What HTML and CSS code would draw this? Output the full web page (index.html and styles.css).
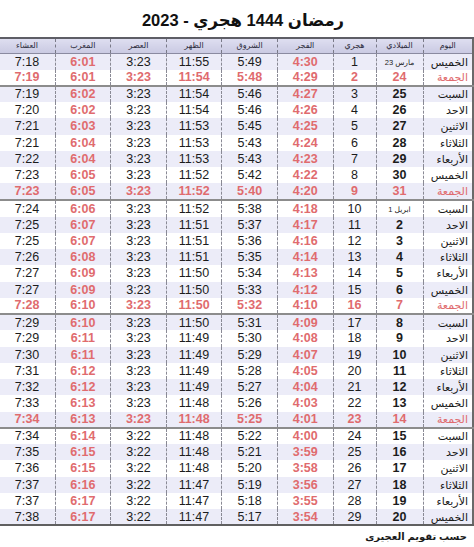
FILE: index.html
```html
<!DOCTYPE html>
<html lang="ar" dir="rtl">
<head>
<meta charset="utf-8">
<title>رمضان 1444</title>
<link rel="stylesheet" href="styles.css">
</head>
<body>
<div class="page">
  <h1 class="title">رمضان 1444 هجري - 2023</h1>
  <table class="tbl">
    <colgroup>
      <col class="c-day"><col class="c-mil"><col class="c-hij"><col class="c-t"><col class="c-t"><col class="c-t"><col class="c-t"><col class="c-t"><col class="c-t">
    </colgroup>
    <thead>
      <tr><th>اليوم</th><th>الميلادي</th><th>هجري</th><th>الفجر</th><th>الشروق</th><th>الظهر</th><th>العصر</th><th>المغرب</th><th>العشاء</th></tr>
    </thead>
    <tbody>
      <tr class="odd"><td class="day">الخميس</td><td class="mil"><span class="mon" dir="ltr">مارس 23</span></td><td>1</td><td class="red">4:30</td><td>5:49</td><td>11:55</td><td>3:23</td><td class="red">6:01</td><td>7:18</td></tr>
      <tr class="fri"><td class="day">الجمعة</td><td class="mil">24</td><td>2</td><td class="red">4:29</td><td>5:48</td><td>11:54</td><td>3:23</td><td class="red">6:01</td><td>7:19</td></tr>

      <tr class="odd wk"><td class="day">السبت</td><td class="mil">25</td><td>3</td><td class="red">4:27</td><td>5:46</td><td>11:54</td><td>3:23</td><td class="red">6:02</td><td>7:19</td></tr>
      <tr><td class="day">الاحد</td><td class="mil">26</td><td>4</td><td class="red">4:26</td><td>5:46</td><td>11:54</td><td>3:23</td><td class="red">6:02</td><td>7:20</td></tr>
      <tr class="odd"><td class="day">الاثنين</td><td class="mil">27</td><td>5</td><td class="red">4:25</td><td>5:45</td><td>11:53</td><td>3:23</td><td class="red">6:03</td><td>7:21</td></tr>
      <tr><td class="day">الثلاثاء</td><td class="mil">28</td><td>6</td><td class="red">4:24</td><td>5:43</td><td>11:53</td><td>3:23</td><td class="red">6:04</td><td>7:21</td></tr>
      <tr class="odd"><td class="day">الأربعاء</td><td class="mil">29</td><td>7</td><td class="red">4:23</td><td>5:43</td><td>11:53</td><td>3:23</td><td class="red">6:04</td><td>7:22</td></tr>
      <tr><td class="day">الخميس</td><td class="mil">30</td><td>8</td><td class="red">4:22</td><td>5:42</td><td>11:52</td><td>3:23</td><td class="red">6:05</td><td>7:23</td></tr>
      <tr class="odd fri"><td class="day">الجمعة</td><td class="mil">31</td><td>9</td><td class="red">4:20</td><td>5:40</td><td>11:52</td><td>3:23</td><td class="red">6:05</td><td>7:23</td></tr>

      <tr class="wk"><td class="day">السبت</td><td class="mil"><span class="mon" dir="ltr">ابريل 1</span></td><td>10</td><td class="red">4:18</td><td>5:38</td><td>11:52</td><td>3:23</td><td class="red">6:06</td><td>7:24</td></tr>
      <tr class="odd"><td class="day">الاحد</td><td class="mil">2</td><td>11</td><td class="red">4:17</td><td>5:37</td><td>11:51</td><td>3:23</td><td class="red">6:07</td><td>7:25</td></tr>
      <tr><td class="day">الاثنين</td><td class="mil">3</td><td>12</td><td class="red">4:16</td><td>5:36</td><td>11:51</td><td>3:23</td><td class="red">6:07</td><td>7:25</td></tr>
      <tr class="odd"><td class="day">الثلاثاء</td><td class="mil">4</td><td>13</td><td class="red">4:14</td><td>5:35</td><td>11:51</td><td>3:23</td><td class="red">6:08</td><td>7:26</td></tr>
      <tr><td class="day">الأربعاء</td><td class="mil">5</td><td>14</td><td class="red">4:13</td><td>5:34</td><td>11:50</td><td>3:23</td><td class="red">6:09</td><td>7:27</td></tr>
      <tr class="odd"><td class="day">الخميس</td><td class="mil">6</td><td>15</td><td class="red">4:12</td><td>5:33</td><td>11:50</td><td>3:23</td><td class="red">6:09</td><td>7:27</td></tr>
      <tr class="fri"><td class="day">الجمعة</td><td class="mil">7</td><td>16</td><td class="red">4:10</td><td>5:32</td><td>11:50</td><td>3:23</td><td class="red">6:10</td><td>7:28</td></tr>

      <tr class="odd wk"><td class="day">السبت</td><td class="mil">8</td><td>17</td><td class="red">4:09</td><td>5:31</td><td>11:50</td><td>3:23</td><td class="red">6:10</td><td>7:29</td></tr>
      <tr><td class="day">الاحد</td><td class="mil">9</td><td>18</td><td class="red">4:08</td><td>5:30</td><td>11:49</td><td>3:23</td><td class="red">6:11</td><td>7:29</td></tr>
      <tr class="odd"><td class="day">الاثنين</td><td class="mil">10</td><td>19</td><td class="red">4:07</td><td>5:29</td><td>11:49</td><td>3:23</td><td class="red">6:11</td><td>7:30</td></tr>
      <tr><td class="day">الثلاثاء</td><td class="mil">11</td><td>20</td><td class="red">4:05</td><td>5:28</td><td>11:49</td><td>3:23</td><td class="red">6:12</td><td>7:31</td></tr>
      <tr class="odd"><td class="day">الأربعاء</td><td class="mil">12</td><td>21</td><td class="red">4:04</td><td>5:27</td><td>11:49</td><td>3:23</td><td class="red">6:12</td><td>7:32</td></tr>
      <tr><td class="day">الخميس</td><td class="mil">13</td><td>22</td><td class="red">4:03</td><td>5:26</td><td>11:48</td><td>3:23</td><td class="red">6:13</td><td>7:33</td></tr>
      <tr class="odd fri"><td class="day">الجمعة</td><td class="mil">14</td><td>23</td><td class="red">4:01</td><td>5:25</td><td>11:48</td><td>3:23</td><td class="red">6:13</td><td>7:34</td></tr>

      <tr class="wk"><td class="day">السبت</td><td class="mil">15</td><td>24</td><td class="red">4:00</td><td>5:22</td><td>11:48</td><td>3:22</td><td class="red">6:14</td><td>7:34</td></tr>
      <tr class="odd"><td class="day">الاحد</td><td class="mil">16</td><td>25</td><td class="red">3:59</td><td>5:21</td><td>11:48</td><td>3:22</td><td class="red">6:15</td><td>7:35</td></tr>
      <tr><td class="day">الاثنين</td><td class="mil">17</td><td>26</td><td class="red">3:58</td><td>5:20</td><td>11:48</td><td>3:22</td><td class="red">6:15</td><td>7:36</td></tr>
      <tr class="odd"><td class="day">الثلاثاء</td><td class="mil">18</td><td>27</td><td class="red">3:56</td><td>5:19</td><td>11:47</td><td>3:22</td><td class="red">6:16</td><td>7:37</td></tr>
      <tr><td class="day">الأربعاء</td><td class="mil">19</td><td>28</td><td class="red">3:55</td><td>5:18</td><td>11:47</td><td>3:22</td><td class="red">6:17</td><td>7:37</td></tr>
      <tr class="odd last"><td class="day">الخميس</td><td class="mil">20</td><td>29</td><td class="red">3:54</td><td>5:17</td><td>11:47</td><td>3:22</td><td class="red">6:17</td><td>7:38</td></tr>
    </tbody>
  </table>
  <p class="source">حسب تقويم العجيري</p>
</div>
</body>
</html>
```
FILE: styles.css
```css
* { box-sizing: border-box; }
html, body {
  margin: 0;
  padding: 0;
  background: #ffffff;
}
body {
  font-family: "Liberation Sans", "DejaVu Sans", Arial, sans-serif;
  color: #1c1c1c;
  direction: rtl;
}
.page {
  width: 474px;
}
.title {
  margin: 0;
  height: 37px;
  padding-top: 9px;
  padding-left: 12px;
  font-size: 16.5px;
  line-height: 22px;
  font-weight: bold;
  text-align: center;
  color: #111;
}
.tbl {
  width: 474px;
  border-collapse: collapse;
  table-layout: fixed;
  border-right: 2px solid #6a6a6a;
}
.c-day { width: 50px; }
.c-mil { width: 47px; }
.c-hij { width: 43px; }
.c-t { width: 55.6px; }

.tbl th {
  height: 15px;
  padding: 0;
  font-size: 8px;
  font-weight: normal;
  color: #2a2a3a;
  background: linear-gradient(#dedef0, #cacae2);
  border-top: 2px solid #5e5e66;
  border-bottom: 1px solid #8a8aa0;
  border-left: 1px dashed #7a7a88;
  text-align: center;
  vertical-align: middle;
}
.tbl td {
  height: 16.25px;
  padding: 0;
  font-size: 12.5px;
  line-height: 14px;
  text-align: center;
  vertical-align: middle;
  border-left: 1px dashed #8a8a95;
  white-space: nowrap;
}
.tbl th:last-child,
.tbl td:last-child { border-left: none; }

.tbl tr.odd td { background: #ececf8; }
.tbl tr.wk td { border-top: 2px solid #8c8c8c; }
.tbl tr.last td { border-bottom: 2px solid #606060; }

.tbl td.day {
  text-align: right;
  padding-right: 4px;
  font-size: 11px;
  color: #1a1a1a;
}
.tbl td.mil {
  font-weight: bold;
}
.tbl td .mon {
  font-size: 7.5px;
  font-weight: normal;
}
.tbl td.red {
  color: #e06b6e;
  font-weight: bold;
}
.tbl tr.fri td {
  color: #e06b6e;
  font-weight: bold;
}
.tbl tr.fri td.day { font-weight: normal; }

.source {
  margin: 5px 7px 0 0;
  font-size: 10px;
  font-weight: bold;
  color: #1a1a1a;
  text-align: right;
}
```
